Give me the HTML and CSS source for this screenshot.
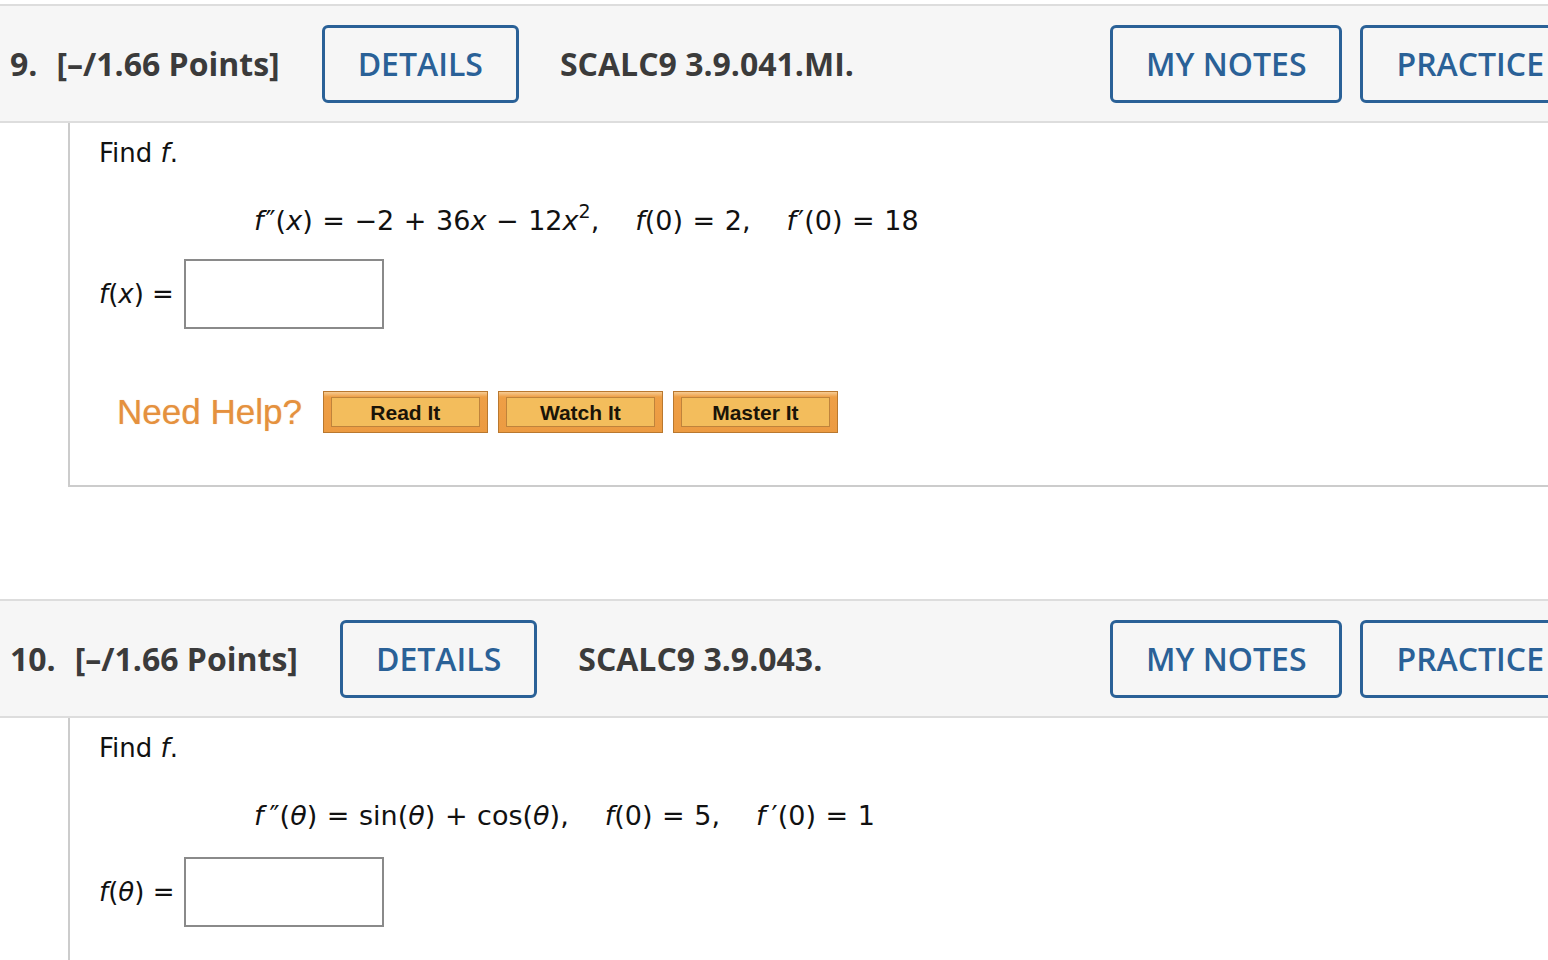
FILE: index.html
```html
<!DOCTYPE html>
<html lang="en">
<head>
<meta charset="utf-8">
<title>Questions</title>
<link rel="stylesheet" href="styles.css">
</head>
<body>
<div class="page">
  <section class="question q9">
    <div class="qhead">
      <span class="qnum">9.</span>
      <span class="pts">[–/1.66 Points]</span>
      <button class="btn details">DETAILS</button>
      <span class="code">SCALC9 3.9.041.MI.</span>
      <div class="right">
        <button class="btn">MY NOTES</button>
        <button class="btn">PRACTICE</button>
      </div>
    </div>
    <div class="qbody">
      <p class="find">Find <i>f</i>.</p>
      <div class="formula">
        <span class="term"><i>f</i><span class="pr">″</span>(<i>x</i>) = −2 + 36<i>x</i> − 12<i>x</i><sup>2</sup>,</span>
        <span class="term"><i>f</i>(0) = 2,</span>
        <span class="term"><i>f</i><span class="pr">′</span>(0) = 18</span>
      </div>
      <div class="answer">
        <span class="lbl"><i>f</i>(<i>x</i>) =</span>
        <span class="box"></span>
      </div>
      <div class="help">
        <span class="need">Need Help?</span>
        <span class="hbtn"><span class="hin">Read It</span></span>
        <span class="hbtn"><span class="hin">Watch It</span></span>
        <span class="hbtn"><span class="hin">Master It</span></span>
      </div>
    </div>
  </section>

  <section class="question q10">
    <div class="qhead">
      <span class="qnum">10.</span>
      <span class="pts">[–/1.66 Points]</span>
      <button class="btn details">DETAILS</button>
      <span class="code">SCALC9 3.9.043.</span>
      <div class="right">
        <button class="btn">MY NOTES</button>
        <button class="btn">PRACTICE</button>
      </div>
    </div>
    <div class="qbody">
      <p class="find">Find <i>f</i>.</p>
      <div class="formula">
        <span class="term"><i>f</i><span class="pr2">″</span>(<i>θ</i>) = sin(<i>θ</i>) + cos(<i>θ</i>),</span>
        <span class="term"><i>f</i>(0) = 5,</span>
        <span class="term"><i>f</i><span class="pr2">′</span>(0) = 1</span>
      </div>
      <div class="answer">
        <span class="lbl"><i>f</i>(<i>θ</i>) =</span>
        <span class="box"></span>
      </div>
    </div>
  </section>
</div>
</body>
</html>
```
FILE: styles.css
```css
html, body {
  margin: 0;
  padding: 0;
  background: #ffffff;
  overflow: hidden;
}
.page {
  width: 1580px;
  padding-top: 4px;
}
.question + .question {
  margin-top: 112px;
}
.qhead {
  display: flex;
  align-items: center;
  height: 115px;
  padding-left: 10px;
  background: #f6f6f6;
  border-top: 2px solid #dddddd;
  border-bottom: 2px solid #dddddd;
  font-family: "Open Sans", "Liberation Sans", sans-serif;
  color: #3b3b3b;
  white-space: nowrap;
}
.qnum {
  font-size: 32px;
  font-weight: 700;
  margin-right: 19px;
}
.pts {
  font-size: 32px;
  font-weight: 700;
  margin-right: 42px;
}
.code {
  font-size: 32px;
  font-weight: 700;
  margin-left: 41px;
}
.btn {
  box-sizing: border-box;
  height: 78px;
  padding: 0 33px;
  border: 3px solid #2a6197;
  border-radius: 6px;
  background: transparent;
  color: #2a6197;
  font-family: "Open Sans", "Liberation Sans", sans-serif;
  font-size: 32px;
  font-weight: 600;
  line-height: 1;
  flex: none;
}
.right {
  display: flex;
  gap: 18px;
  margin-left: auto;
  flex: none;
}
.qbody {
  margin-left: 68px;
  border-left: 2px solid #cccccc;
  border-bottom: 2px solid #cccccc;
  padding: 15px 0 52px 29px;
  font-family: "DejaVu Sans", Verdana, sans-serif;
  font-size: 26px;
  line-height: 31px;
  color: #111111;
}
.q10 .qbody {
  padding-bottom: 200px;
}
.find {
  margin: 0;
}
.formula {
  margin: 36px 0 0 155px;
  display: flex;
  gap: 36px;
  white-space: nowrap;
  font-size: 27px;
  word-spacing: 1px;
}
.pr {
  margin-left: 2px;
}
.pr2 {
  margin-left: 6px;
}
.formula sup {
  font-size: 19px;
  line-height: 0;
  vertical-align: 12px;
}
.answer {
  display: flex;
  align-items: center;
  margin-top: 23px;
}
.q10 .answer {
  margin-top: 26px;
}
.lbl {
  margin-right: 10px;
  white-space: nowrap;
}
.box {
  box-sizing: border-box;
  width: 200px;
  height: 70px;
  border: 2px solid #8a8a8a;
  background: #ffffff;
}
.help {
  display: flex;
  align-items: center;
  gap: 10px;
  margin-top: 62px;
  padding-left: 18px;
}
.need {
  font-family: "Liberation Sans", Arial, sans-serif;
  font-size: 35px;
  line-height: 42px;
  color: #e5913e;
  margin-right: 11px;
  text-shadow: 0 0 1px rgba(229, 145, 62, 0.6);
}
.hbtn {
  box-sizing: border-box;
  width: 165px;
  height: 42px;
  padding: 5px 7px;
  border: 1px solid #b9782f;
  background: linear-gradient(#f7cc93 0, #ee9f46 5px, #ec9b42 100%);
  display: flex;
}
.hin {
  flex: 1;
  display: flex;
  align-items: center;
  justify-content: center;
  border: 1px solid #bf833b;
  background: #f3bd5c;
  font-family: "Liberation Sans", Arial, sans-serif;
  font-weight: 700;
  font-size: 21px;
  color: #1a1408;
}
```
